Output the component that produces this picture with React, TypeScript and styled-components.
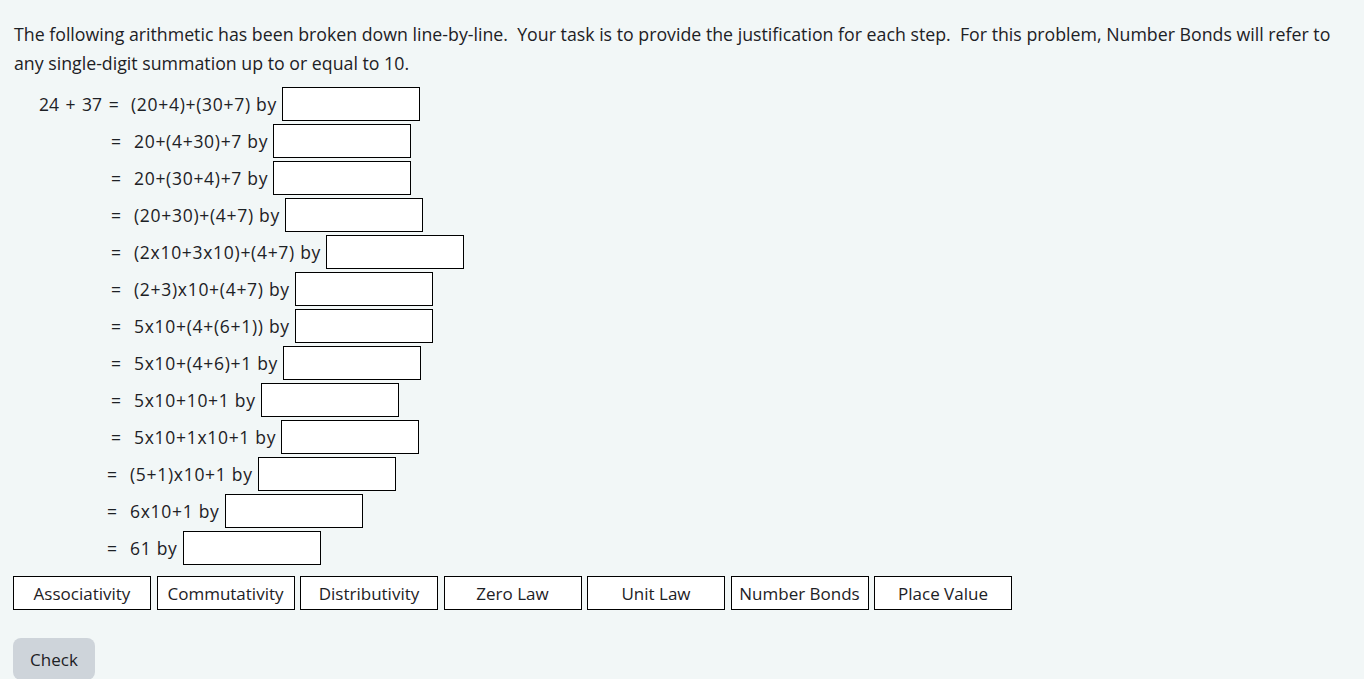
import React from 'react';
import styled, { createGlobalStyle } from 'styled-components';

const GlobalStyle = createGlobalStyle`
  html, body {
    margin: 0;
    padding: 0;
    background: #f2f7f7;
  }
  body {
    font-family: "Open Sans", "Noto Sans", sans-serif;
    color: #1d2125;
  }
`;

const Page = styled.div`
  padding: 20px 14px 0 14px;
  font-size: 17px;
`;

const Prompt = styled.p`
  margin: 0 0 7px 0;
  font-size: 17.75px;
  line-height: 29px;
  max-width: 1336px;
`;

const Equations = styled.div`
  display: flex;
  flex-direction: column;
  margin-left: 25px;
  font-size: 17.5px;
`;

const Row = styled.div`
  display: flex;
  align-items: center;
  height: 37px;
  white-space: nowrap;
`;

const Lhs = styled.span<{ $w: number }>`
  width: ${p => p.$w}px;
  text-align: right;
  word-spacing: 2px;
  flex: none;
`;

const Expr = styled.span`
  margin-left: 13px;
  letter-spacing: 0.7px;
`;

const Drop = styled.span`
  display: inline-block;
  width: 136px;
  height: 32px;
  margin-left: 5px;
  border: 1px solid #000;
  background: #fff;
`;

const Choices = styled.div`
  display: flex;
  gap: 5.5px;
  margin-top: 10px;
  margin-left: -1px;
`;

const Choice = styled.div`
  width: 136px;
  height: 32px;
  border: 1px solid #000;
  background: #fff;
  display: flex;
  align-items: center;
  justify-content: center;
  white-space: nowrap;
`;

const CheckButton = styled.button`
  margin-top: 28px;
  margin-left: -1px;
  width: 82px;
  height: 42px;
  border: none;
  border-radius: 8px;
  background: #ced4da;
  color: #1d2125;
  font-family: inherit;
  font-size: 17px;
  padding: 0;
`;

const steps: { lhs: string; w: number; expr: string }[] = [
  { lhs: '24 + 37 =', w: 79, expr: '(20+4)+(30+7) by' },
  { lhs: '=', w: 82, expr: '20+(4+30)+7 by' },
  { lhs: '=', w: 82, expr: '20+(30+4)+7 by' },
  { lhs: '=', w: 82, expr: '(20+30)+(4+7) by' },
  { lhs: '=', w: 82, expr: '(2x10+3x10)+(4+7) by' },
  { lhs: '=', w: 82, expr: '(2+3)x10+(4+7) by' },
  { lhs: '=', w: 82, expr: '5x10+(4+(6+1)) by' },
  { lhs: '=', w: 82, expr: '5x10+(4+6)+1 by' },
  { lhs: '=', w: 82, expr: '5x10+10+1 by' },
  { lhs: '=', w: 82, expr: '5x10+1x10+1 by' },
  { lhs: '=', w: 78, expr: '(5+1)x10+1 by' },
  { lhs: '=', w: 78, expr: '6x10+1 by' },
  { lhs: '=', w: 78, expr: '61 by' },
];

const choices = [
  'Associativity',
  'Commutativity',
  'Distributivity',
  'Zero Law',
  'Unit Law',
  'Number Bonds',
  'Place Value',
];

export default function App() {
  return (
    <>
      <GlobalStyle />
      <Page>
        <Prompt>
          The following arithmetic has been broken down line-by-line.&nbsp; Your task is to provide the justification for each step.&nbsp; For this problem, Number Bonds will refer to any single-digit summation up to or equal to 10.
        </Prompt>

        <Equations>
          {steps.map((s, i) => (
            <Row key={i}>
              <Lhs $w={s.w}>{s.lhs}</Lhs>
              <Expr>{s.expr}</Expr>
              <Drop />
            </Row>
          ))}
        </Equations>

        <Choices>
          {choices.map(c => (
            <Choice key={c}>{c}</Choice>
          ))}
        </Choices>

        <CheckButton>Check</CheckButton>
      </Page>
    </>
  );
}
